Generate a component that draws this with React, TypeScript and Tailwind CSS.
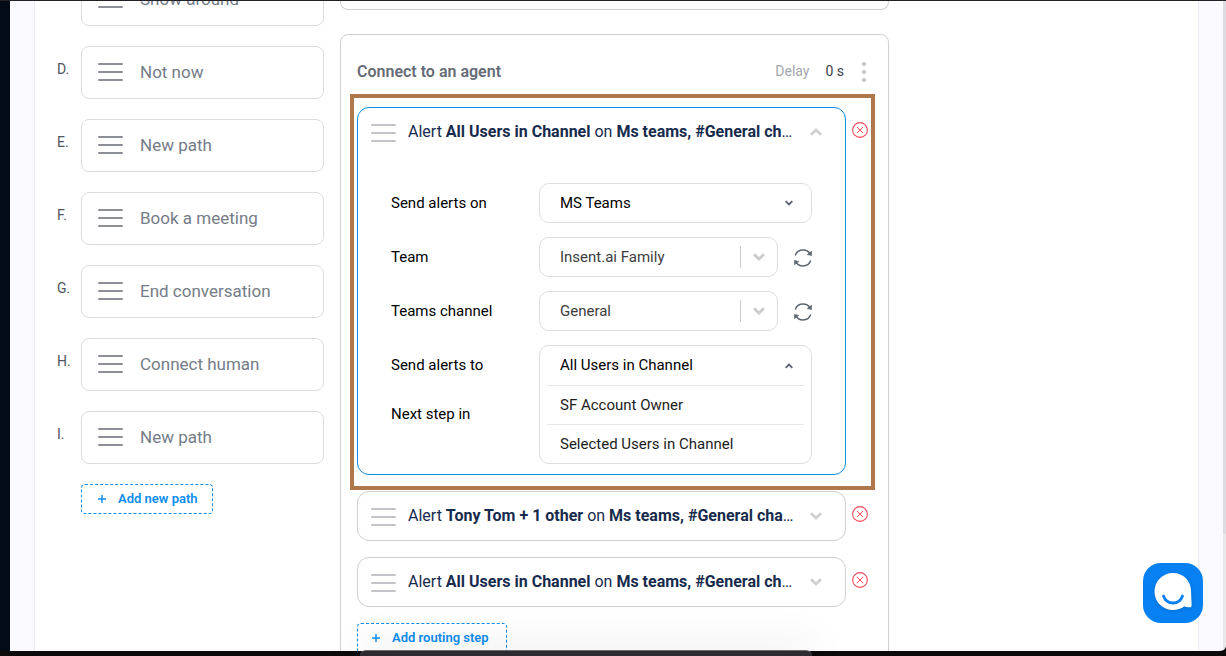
import type { ReactNode } from "react";
import { clsx } from "clsx";

interface PathItem {
  letter: string;
  name: string;
}

interface RoutingStep {
  target: string;
  channel: string;
}

const PATHS: PathItem[] = [
  { letter: "C.", name: "Show around" },
  { letter: "D.", name: "Not now" },
  { letter: "E.", name: "New path" },
  { letter: "F.", name: "Book a meeting" },
  { letter: "G.", name: "End conversation" },
  { letter: "H.", name: "Connect human" },
  { letter: "I.", name: "New path" },
];

const STEPS: RoutingStep[] = [
  { target: "All Users in Channel", channel: "Ms teams, #General ch" },
  { target: "Tony Tom + 1 other", channel: "Ms teams, #General cha" },
  { target: "All Users in Channel", channel: "Ms teams, #General ch" },
];

function DragHandle({ className }: { className: string }) {
  return (
    <svg
      viewBox="0 0 25 19"
      className={clsx("h-[19px] w-[25px] shrink-0", className)}
      stroke="currentColor"
      strokeWidth="2"
      strokeLinecap="round"
      aria-hidden="true"
    >
      <path d="M1 1H24M1 9H24M1 17H24" />
    </svg>
  );
}

function Chevron({ up = false, className }: { up?: boolean; className: string }) {
  return (
    <svg
      viewBox="0 0 12 8"
      className={clsx("shrink-0", className)}
      fill="none"
      stroke="currentColor"
      strokeWidth="2.8"
      aria-hidden="true"
    >
      <path d={up ? "M1 6.8L6 2L11 6.8" : "M1 1.2L6 6L11 1.2"} />
    </svg>
  );
}

function AddButton({ label, className }: { label: string; className: string }) {
  return (
    <button
      type="button"
      className={clsx(
        "flex h-[30px] items-center rounded border border-dashed border-[#0b8cf0] text-[13px] font-semibold text-[#0b8cf0]",
        className,
      )}
    >
      <svg viewBox="0 0 8 8" className="mr-3 size-2" stroke="currentColor" strokeWidth="1.4" aria-hidden="true">
        <path d="M4 0V8M0 4H8" />
      </svg>
      {label}
    </button>
  );
}

function RemoveButton() {
  return (
    <button type="button" aria-label="Remove step" className="mt-[15px] text-[#f8485a]">
      <svg viewBox="0 0 16 16" className="size-4" fill="none" stroke="currentColor" aria-hidden="true">
        <circle cx="8" cy="8" r="7.4" strokeWidth="1.1" />
        <path d="M5 5L11 11M11 5L5 11" />
      </svg>
    </button>
  );
}

function RefreshButton({ label }: { label: string }) {
  return (
    <button type="button" aria-label={label} className="mt-0.5 ml-4 text-[#5d6670]">
      <svg viewBox="0 0 18 18" className="size-[18px]" fill="none" stroke="currentColor" strokeWidth="1.5" aria-hidden="true">
        <path d="M1.3 6.4C2.4 3 5.4 1 9 1C12 1 14.6 2.4 16 4.8" />
        <path d="M16.7 11.6C15.6 15 12.6 17 9 17C6 17 3.4 15.6 2 13.2" />
        <path d="M17.6 2.2V6.6L13.2 5.6ZM0.4 15.8V11.4L4.8 12.4Z" fill="currentColor" strokeWidth="0.6" />
      </svg>
    </button>
  );
}

function StepCard({
  step,
  open = false,
  children,
}: {
  step: RoutingStep;
  open?: boolean;
  children?: ReactNode;
}) {
  return (
    <div className="flex items-start gap-1.5">
      <div
        className={clsx(
          "min-w-0 flex-1 rounded-xl border bg-white",
          open ? "border-[#0b8ce8]" : "border-[#d0d0d2]",
        )}
      >
        <div className="flex h-12 items-center pr-[23px] pl-[13px]">
          <DragHandle className="mt-[3px] text-[#c3c3c9]" />
          <p className="ml-3 flex-1 whitespace-nowrap text-[16px] text-[#172b4d]">
            Alert <b>{step.target}</b> on <b>{step.channel}</b>…
          </p>
          <button type="button" aria-label={open ? "Collapse step" : "Expand step"} className="text-[#d0d0d0]">
            <Chevron up={open} className="h-2 w-3" />
          </button>
        </div>
        {children}
      </div>
      <RemoveButton />
    </div>
  );
}

function FormRow({ label, htmlFor, children }: { label: string; htmlFor: string; children: ReactNode }) {
  return (
    <div className="flex h-10 items-center">
      <label htmlFor={htmlFor} className="w-[148px] shrink-0 text-[15px] text-black">
        {label}
      </label>
      {children}
    </div>
  );
}

function SourceSelect({ id, value }: { id: string; value: string }) {
  return (
    <div className="flex h-10 flex-1 items-center rounded-[10px] border border-[#dedede] pr-3">
      <select id={id} className="min-w-0 flex-1 appearance-none bg-transparent pl-5 text-[15px] text-[#3c3c3c] outline-none">
        <option>{value}</option>
      </select>
      <span className="mr-3 h-[22px] w-px bg-[#cccccc]" />
      <Chevron className="h-2 w-3 text-[#cccccc]" />
    </div>
  );
}

function AlertForm() {
  return (
    <form className="flex flex-col gap-3.5 px-[33px] pt-[27px] pb-[45px]">
      <FormRow label="Send alerts on" htmlFor="alert-source">
        <div className="flex h-10 flex-1 items-center rounded-[10px] border border-[#dedede] pr-[18px]">
          <select id="alert-source" className="flex-1 appearance-none bg-transparent pl-5 text-[15px] text-black outline-none">
            <option>MS Teams</option>
          </select>
          <Chevron className="h-1.5 w-2 text-[#5d6475]" />
        </div>
      </FormRow>
      <FormRow label="Team" htmlFor="team">
        <SourceSelect id="team" value="Insent.ai Family" />
        <RefreshButton label="Refresh teams" />
      </FormRow>
      <FormRow label="Teams channel" htmlFor="channel">
        <SourceSelect id="channel" value="General" />
        <RefreshButton label="Refresh channels" />
      </FormRow>
      <FormRow label="Send alerts to" htmlFor="recipients">
        <div className="relative h-10 flex-1">
          {/* open menu, lies over the row below */}
          <div className="absolute inset-x-0 top-0 z-10 rounded-[10px] border border-[#dedede] bg-white px-[7px] text-[15px]">
            <button
              id="recipients"
              type="button"
              aria-expanded="true"
              className="flex h-10 w-full items-center justify-between border-b border-[#e6e6e6] pl-[13px] pr-[11px] text-black"
            >
              All Users in Channel
              <Chevron up className="h-1.5 w-2 text-[#5d6475]" />
            </button>
            <button type="button" className="flex h-[39px] w-full items-center border-b border-[#e6e6e6] pl-[13px] text-[#1c1c1c]">
              SF Account Owner
            </button>
            <button type="button" className="flex h-[38px] w-full items-center pl-[13px] text-[#1c1c1c]">
              Selected Users in Channel
            </button>
          </div>
        </div>
      </FormRow>
      <div className="flex h-[30px] items-center text-[15px] text-black">Next step in</div>
    </form>
  );
}

function PathList() {
  return (
    <section className="-mt-7 w-[267px] shrink-0">
      <ul className="flex flex-col gap-5">
        {PATHS.map((path) => (
          <li key={path.letter} className="flex items-start">
            <span className="w-6 shrink-0 pt-[13px] text-[14px] leading-5 text-[#4f5660]">{path.letter}</span>
            <div className="flex h-[53px] flex-1 items-center rounded-lg border border-[#dcdcdc] pl-4">
              <DragHandle className="text-[#8d8f98]" />
              <span className="ml-[17px] text-[17px] text-[#747c87]">{path.name}</span>
            </div>
          </li>
        ))}
      </ul>
      <AddButton label="Add new path" className="mt-5 ml-6 w-[132px] pl-4" />
    </section>
  );
}

function AgentPanel() {
  return (
    <section className="rounded-lg border border-[#d0d0d2] pr-5 pb-6 pl-4">
      <header className="flex h-[59px] items-center pt-3.5">
        <h2 className="flex-1 text-[16px] font-semibold text-[#666b76]">Connect to an agent</h2>
        <span className="text-[14px] text-[#a3a6ad]">Delay</span>
        <span className="ml-4 text-[14px] text-[#3a3f4a]">0 s</span>
        <button type="button" aria-label="More options" className="ml-4 text-[#c3c4c8]">
          <svg viewBox="0 0 8 20" className="h-5 w-2" fill="currentColor" aria-hidden="true">
            <circle cx="4" cy="2" r="2" />
            <circle cx="4" cy="10" r="2" />
            <circle cx="4" cy="18" r="2" />
          </svg>
        </button>
      </header>
      <div className="-mx-[7px] border-4 border-[#ad784a] px-[3px] pt-[9px] pb-[11px]">
        <StepCard step={STEPS[0]} open>
          <AlertForm />
        </StepCard>
      </div>
      <div className="mt-px flex flex-col gap-4">
        <StepCard step={STEPS[1]} />
        <StepCard step={STEPS[2]} />
        <AddButton label="Add routing step" className="w-[150px] pl-3.5" />
      </div>
    </section>
  );
}

function ChatButton() {
  return (
    <button
      type="button"
      aria-label="Open chat"
      className="absolute right-[23px] bottom-[33px] flex size-[60px] items-center justify-center rounded-[18px] bg-[#0781f2]"
    >
      <svg viewBox="0 0 60 60" className="size-[60px] drop-shadow-sm" fill="none" aria-hidden="true">
        <path
          d="M30 10C40.5 10 48 18 48 28L48.6 42C48.7 43.5 48 44.3 46.6 44.3C44.6 44.3 42.6 44 41.4 43.2C38 45.7 34.4 47 30 47C19.5 47 11.5 38.8 11.5 28.5C11.5 18.2 19.5 10 30 10Z"
          fill="white"
        />
        <path d="M20.5 33C22 37.5 25.5 40 30 40C34.5 40 38 37.5 39.5 33" stroke="#0781f2" strokeWidth="2.8" strokeLinecap="round" />
      </svg>
    </button>
  );
}

export default function App() {
  return (
    <div className="relative flex h-screen flex-col overflow-hidden bg-[#0d0a0c] font-[Roboto,sans-serif]">
      <div className="h-px shrink-0 bg-[#232126]" />
      <div className="flex min-h-0 flex-1 overflow-hidden">
        <div className="w-2.5 shrink-0 bg-[#020b16]" />
        <div className="flex min-w-0 flex-1 overflow-hidden rounded-br-md bg-[#faf9fe] pl-6">
          <main className="flex flex-1 items-start gap-4 overflow-hidden border-x border-[#ececf8] bg-white pl-[22px]">
            <PathList />
            <div className="flex w-full max-w-[549px] flex-col gap-6">
              <div className="h-[9px] rounded-b-lg border border-t-0 border-[#d0d0d2]" />
              <AgentPanel />
            </div>
          </main>
          {/* scroll track and thumb */}
          <div className="ml-6 w-[3px] shrink-0 bg-[#e9e9ec]">
            <div className="h-[82%] bg-[#dcdce2]" />
          </div>
        </div>
      </div>
      <div className="h-[5px] shrink-0 bg-[#0d0a0c]" />
      <div className="absolute bottom-0 left-[360px] h-1.5 w-[452px] rounded-t-md border-t border-[#6b6a6d] bg-[#2d2a30] shadow-[0_0_40px_rgba(0,0,0,0.25)]" />
      <ChatButton />
    </div>
  );
}
